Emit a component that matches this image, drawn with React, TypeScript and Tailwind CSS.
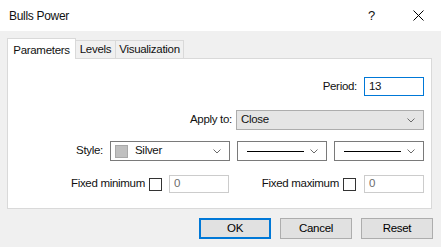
import type { ReactNode } from 'react';

const FONT = "font-['Segoe_UI','Liberation_Sans',Arial,sans-serif]";

function Chevron() {
  return (
    <svg width="8" height="5" viewBox="0 0 8 5" className="shrink-0" aria-hidden="true">
      <path d="M0.5 0.5 L4 4 L7.5 0.5" fill="none" stroke="#6a6a6a" strokeWidth="1" />
    </svg>
  );
}

function Combo({ className, children }: { className: string; children: ReactNode }) {
  return (
    <div className={`flex h-[20px] items-center border pl-[4px] pr-[8px] ${className}`}>
      <div className="flex flex-1 items-center">{children}</div>
      <Chevron />
    </div>
  );
}

function LineCombo() {
  return (
    <Combo className="w-[90px] border-[#7a7a7a] bg-white">
      <div className="ml-[5px] h-px w-[57px] bg-black" />
    </Combo>
  );
}

function Check() {
  return <div className="h-[13px] w-[13px] border border-[#333333] bg-white" />;
}

function DisabledInput() {
  return (
    <div className="flex h-[18px] w-[60px] items-center border border-[#cccccc] bg-white pl-[4px] text-[#6d6d6d]">
      0
    </div>
  );
}

function Button({ label, primary }: { label: string; primary?: boolean }) {
  return (
    <div
      className={`flex h-[21px] w-[72px] items-center justify-center bg-[#e1e1e1] text-black ${
        primary ? 'border-2 border-[#0078d7]' : 'border border-[#adadad]'
      }`}
    >
      {label}
    </div>
  );
}

export default function App() {
  return (
    <div className={`flex h-[247px] w-[441px] flex-col bg-[#f0f0f0] text-[11.5px] tracking-[-0.3px] text-[#111111] ${FONT}`}>
      {/* Title bar */}
      <div className="flex h-[31px] items-center bg-white pl-[9px] pr-[17px]">
        <span className="flex-1 text-[12px]">Bulls Power</span>
        <span className="mr-[38px] text-[13px]">?</span>
        <svg width="11" height="11" viewBox="0 0 11 11" aria-hidden="true">
          <path d="M0.5 0.5 L10.5 10.5 M10.5 0.5 L0.5 10.5" stroke="#000" strokeWidth="1" />
        </svg>
      </div>

      {/* Tabs */}
      <div className="mt-[7px] flex h-[20px] items-end pl-[7px]">
        <div className="relative z-10 -mb-px flex h-[21px] w-[69px] items-start justify-center border border-b-0 border-[#d9d9d9] bg-white pt-[3px]">
          Parameters
        </div>
        <div className="flex h-[18px] w-[40px] items-center justify-center border border-l-0 border-b-0 border-[#d9d9d9] bg-[#f0f0f0]">
          Levels
        </div>
        <div className="flex h-[18px] w-[68px] items-center justify-center border border-l-0 border-b-0 border-[#d9d9d9] bg-[#f0f0f0]">
          Visualization
        </div>
      </div>

      {/* Panel */}
      <div className="mx-[7px] mr-[9px] flex h-[151px] flex-col border border-[#d9d9d9] bg-white pr-[7px] pt-[18px]">
        <div className="flex items-center justify-end">
          <span className="mr-[7px]">Period:</span>
          <div className="flex h-[19px] w-[60px] items-center border border-[#0078d7] pl-[4px]">13</div>
        </div>

        <div className="mt-[14px] flex items-center justify-end">
          <span className="mr-[4px]">Apply to:</span>
          <Combo className="w-[188px] border-[#adadad] bg-[#e5e5e5]">Close</Combo>
        </div>

        <div className="mt-[11px] flex items-center justify-end gap-[7px]">
          <span>Style:</span>
          <Combo className="w-[120px] border-[#7a7a7a] bg-white">
            <div className="h-[13px] w-[13px] border border-[#a9a9a9] bg-[#c0c0c0]" />
            <span className="ml-[7px]">Silver</span>
          </Combo>
          <LineCombo />
          <LineCombo />
        </div>

        <div className="mt-[14px] flex items-center">
          <div className="flex flex-1 items-center justify-end">
            <span className="mr-[4px]">Fixed minimum</span>
            <Check />
            <div className="ml-[7px]">
              <DisabledInput />
            </div>
          </div>
          <div className="flex w-[195px] items-center justify-end">
            <span className="mr-[4px]">Fixed maximum</span>
            <Check />
            <div className="ml-[8px]">
              <DisabledInput />
            </div>
          </div>
        </div>
      </div>

      {/* Buttons */}
      <div className="mt-[9px] flex justify-end gap-[9px] pr-[8px]">
        <Button label="OK" primary />
        <Button label="Cancel" />
        <Button label="Reset" />
      </div>
    </div>
  );
}
